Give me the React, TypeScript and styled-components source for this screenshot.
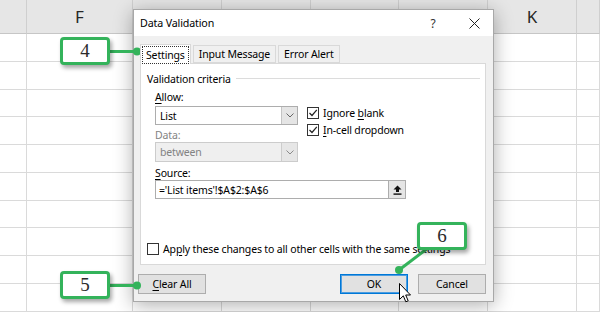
import React from 'react';
import styled, { createGlobalStyle } from 'styled-components';

const GlobalStyle = createGlobalStyle`
  * { box-sizing: border-box; }
  body {
    margin: 0;
    background: #fff;
    overflow: hidden;
  }
`;

const Page = styled.div`
  position: relative;
  width: 600px;
  height: 312px;
  overflow: hidden;
  background: #fff;
  font-family: "Noto Sans", "Open Sans", sans-serif;
  color: #000;
`;

// spreadsheet behind the dialog
const Sheet = styled.div`
  display: grid;
  grid-template-columns: 27px 106px 89px 88.5px 88.5px 89px 89px 23px;
  grid-template-rows: 34px repeat(11, 27.75px);
`;

const HeadCell = styled.div`
  display: flex;
  align-items: center;
  justify-content: center;
  background: #e6e6e6;
  border-right: 1px solid #cfcfcf;
  border-bottom: 1px solid #c6c6c6;
  font-size: 17px;
  color: #262626;
`;

const Cell = styled.div`
  border-right: 1px solid #dadada;
  border-bottom: 1px solid #dadada;
`;

// dialog window
const Dialog = styled.div`
  position: absolute;
  left: 133px;
  top: 9px;
  width: 361px;
  height: 293px;
  display: flex;
  flex-direction: column;
  background: #f0f0f0;
  border: 1px solid #a8a8a8;
  box-shadow: 0 3px 18px rgba(0, 0, 0, 0.32);
  font-size: 10.5px;
  letter-spacing: -0.15px;
`;

const TitleBar = styled.div`
  display: flex;
  align-items: center;
  height: 27px;
  padding-left: 6px;
  background: #fff;
`;

const Title = styled.div`
  flex: 1;
  font-size: 10.7px;
`;

const HelpButton = styled.div`
  width: 24px;
  margin-right: 10px;
  text-align: center;
  font-size: 12px;
  color: #333;
`;

const CloseButton = styled.div`
  width: 38px;
  display: flex;
  justify-content: center;
`;

const Body = styled.div`
  flex: 1;
  display: flex;
  flex-direction: column;
  padding: 9px 7px 7px 6px;
`;

const Tabs = styled.div`
  display: flex;
  align-items: flex-end;
  height: 18px;
  gap: 2px;
`;

const Tab = styled.div<{ $active?: boolean }>`
  display: flex;
  align-items: center;
  height: ${p => (p.$active ? 20 : 18)}px;
  padding: 0 ${p => (p.$active ? 2 : 5)}px;
  background: ${p => (p.$active ? '#fff' : '#f0f0f0')};
  border: 1px solid #d9d9d9;
  border-bottom: ${p => (p.$active ? 'none' : '1px solid #d9d9d9')};
  margin-bottom: ${p => (p.$active ? -1 : 0)}px;
  position: relative;
  z-index: ${p => (p.$active ? 1 : 0)};
`;

const FocusText = styled.span`
  padding: 1px 3px;
  outline: 1px dotted #333;
  line-height: 14px;
`;

const Panel = styled.div`
  height: 202px;
  display: flex;
  flex-direction: column;
  background: #fff;
  border: 1px solid #d9d9d9;
  padding: 8px 5px 6px 6px;
`;

const GroupHeader = styled.div`
  display: flex;
  align-items: center;
  height: 14px;
  gap: 5px;
  &::after {
    content: '';
    flex: 1;
    height: 1px;
    background: #dcdcdc;
    margin-top: -1px;
  }
`;

const Criteria = styled.div`
  display: flex;
  flex-direction: column;
  padding-left: 8px;
`;

const FieldLabel = styled.div<{ $disabled?: boolean; $gap: number }>`
  height: 14px;
  line-height: 14px;
  margin-top: ${p => p.$gap}px;
  color: ${p => (p.$disabled ? '#838383' : '#000')};
`;

// the check boxes hang beside the Allow combo and do not push the rows below
const ComboRow = styled.div`
  display: flex;
  align-items: flex-start;
  gap: 9px;
  height: 19px;
  margin-top: 2px;
`;

const Combo = styled.div<{ $disabled?: boolean; $h: number }>`
  display: flex;
  flex-shrink: 0;
  width: 143px;
  height: ${p => p.$h}px;
  background: ${p => (p.$disabled ? '#efefef' : '#fff')};
  border: 1px solid ${p => (p.$disabled ? '#cccccc' : '#adadad')};
  color: ${p => (p.$disabled ? '#838383' : '#000')};
`;

const ComboText = styled.div`
  flex: 1;
  display: flex;
  align-items: center;
  padding-left: 4px;
`;

const DropButton = styled.div<{ $disabled?: boolean }>`
  width: 16px;
  display: flex;
  align-items: center;
  justify-content: center;
  background: ${p => (p.$disabled ? '#e6e6e6' : '#e5e5e5')};
  border-left: 1px solid ${p => (p.$disabled ? '#cccccc' : '#c4c4c4')};
`;

const Checks = styled.div`
  display: flex;
  flex-direction: column;
  gap: 5px;
  margin-top: 1px;
`;

const CheckRow = styled.div`
  display: flex;
  align-items: center;
  gap: 4px;
  height: 12px;
`;

const Box = styled.div`
  width: 12px;
  height: 12px;
  flex-shrink: 0;
  border: 1px solid #333;
  background: #fff;
  display: flex;
  align-items: center;
  justify-content: center;
`;

const SourceBox = styled.div`
  display: flex;
  align-items: center;
  width: 251px;
  height: 19px;
  border: 1px solid #adadad;
  background: #fff;
`;

const SourceText = styled.div`
  flex: 1;
  padding-left: 3px;
`;

const RangeButton = styled.div`
  width: 17px;
  height: 17px;
  display: flex;
  align-items: center;
  justify-content: center;
  background: #e5e5e5;
  border-left: 1px solid #adadad;
`;

const ApplyRow = styled(CheckRow)`
  margin-top: auto;
  margin-bottom: 2px;
  height: 14px;
`;

const ButtonBar = styled.div`
  display: flex;
  justify-content: space-between;
  margin-top: 9px;
  margin-left: -2px;
`;

const ButtonGroup = styled.div`
  display: flex;
  gap: 10px;
`;

const Button = styled.div<{ $default?: boolean }>`
  width: 68px;
  height: 20px;
  display: flex;
  align-items: center;
  justify-content: center;
  background: #e1e1e1;
  border: 1px solid ${p => (p.$default ? '#0078d7' : '#adadad')};
  box-shadow: ${p => (p.$default ? 'inset 0 0 0 1px #4d9de0' : 'none')};
`;

const Key = styled.span`
  text-decoration: underline;
  text-underline-offset: 2px;
`;

// callouts over the screenshot
const Overlay = styled.svg`
  position: absolute;
  left: 0;
  top: 0;
  pointer-events: none;
`;

const Callout = styled.div<{ $x: number; $y: number }>`
  position: absolute;
  left: ${p => p.$x}px;
  top: ${p => p.$y}px;
  width: 50px;
  height: 28px;
  display: flex;
  align-items: center;
  justify-content: center;
  background: #fff;
  border: 3px solid #34b35b;
  border-radius: 4px;
  box-shadow: 2px 3px 4px rgba(0, 0, 0, 0.35);
  font-family: "Liberation Serif", serif;
  font-size: 19px;
  color: #2b2b2b;
`;

const Cursor = styled.svg`
  position: absolute;
  left: 399px;
  top: 283px;
`;

const Chevron = ({ color }: { color: string }) => (
  <svg width="8" height="5" viewBox="0 0 8 5">
    <path d="M0.5 0.5 L4 4 L7.5 0.5" fill="none" stroke={color} strokeWidth="1" />
  </svg>
);

const Tick = () => (
  <svg width="10" height="10" viewBox="0 0 10 10">
    <path d="M1.5 5 L4 7.5 L8.8 1.8" fill="none" stroke="#222" strokeWidth="1.2" />
  </svg>
);

const cols = ['', 'F', '', '', '', '', 'K', ''];

export default function App() {
  return (
    <Page>
      <GlobalStyle />
      <Sheet>
        {cols.map((c, i) => (
          <HeadCell key={'h' + i}>{c}</HeadCell>
        ))}
        {Array.from({ length: 11 * cols.length }).map((_, i) => (
          <Cell key={i} />
        ))}
      </Sheet>

      <Dialog>
        <TitleBar>
          <Title>Data Validation</Title>
          <HelpButton>?</HelpButton>
          <CloseButton>
            <svg width="11" height="11" viewBox="0 0 11 11">
              <path d="M0.5 0.5 L10.5 10.5 M10.5 0.5 L0.5 10.5" stroke="#222" strokeWidth="1" />
            </svg>
          </CloseButton>
        </TitleBar>
        <Body>
          <Tabs>
            <Tab $active>
              <FocusText>Settings</FocusText>
            </Tab>
            <Tab>Input Message</Tab>
            <Tab>Error Alert</Tab>
          </Tabs>
          <Panel>
            <GroupHeader>Validation criteria</GroupHeader>
            <Criteria>
              <FieldLabel $gap={4}>
                <Key>A</Key>llow:
              </FieldLabel>
              <ComboRow>
                <Combo $h={19}>
                  <ComboText>List</ComboText>
                  <DropButton>
                    <Chevron color="#666" />
                  </DropButton>
                </Combo>
                <Checks>
                  <CheckRow>
                    <Box>
                      <Tick />
                    </Box>
                    <span>
                      Ignore <Key>b</Key>lank
                    </span>
                  </CheckRow>
                  <CheckRow>
                    <Box>
                      <Tick />
                    </Box>
                    <span>
                      <Key>I</Key>n-cell dropdown
                    </span>
                  </CheckRow>
                </Checks>
              </ComboRow>
              <FieldLabel $disabled $gap={3}>
                Data:
              </FieldLabel>
              <Combo $disabled $h={20}>
                <ComboText>between</ComboText>
                <DropButton $disabled>
                  <Chevron color="#8a8a8a" />
                </DropButton>
              </Combo>
              <FieldLabel $gap={4}>
                <Key>S</Key>ource:
              </FieldLabel>
              <SourceBox>
                <SourceText>='List items'!$A$2:$A$6</SourceText>
                <RangeButton>
                  <svg width="9" height="10" viewBox="0 0 9 10">
                    <path d="M4.5 0.5 L8.5 4.5 L6 4.5 L6 7 L3 7 L3 4.5 L0.5 4.5 Z" fill="#111" />
                    <rect x="0.5" y="8.4" width="8" height="1.4" fill="#111" />
                  </svg>
                </RangeButton>
              </SourceBox>
            </Criteria>
            <ApplyRow>
              <Box />
              <span>
                Ap<Key>p</Key>ly these changes to all other cells with the same settings
              </span>
            </ApplyRow>
          </Panel>
          <ButtonBar>
            <Button>
              <span>
                <Key>C</Key>lear All
              </span>
            </Button>
            <ButtonGroup>
              <Button $default>OK</Button>
              <Button>Cancel</Button>
            </ButtonGroup>
          </ButtonBar>
        </Body>
      </Dialog>

      <Overlay width="600" height="312" viewBox="0 0 600 312">
        <g stroke="#34b35b" strokeWidth="3" fill="#34b35b">
          <line x1="108" y1="51.5" x2="137" y2="51.5" />
          <line x1="108" y1="285.5" x2="137" y2="285.5" />
          <line x1="428" y1="248" x2="399" y2="270" />
          <circle cx="137" cy="51.5" r="4" stroke="none" />
          <circle cx="137" cy="285.5" r="4" stroke="none" />
          <circle cx="399" cy="270" r="4" stroke="none" />
        </g>
      </Overlay>

      <Callout $x={60} $y={37}>4</Callout>
      <Callout $x={60} $y={271}>5</Callout>
      <Callout $x={417} $y={222}>6</Callout>

      <Cursor width="13" height="21" viewBox="0 0 13 21">
        <path
          d="M0.5 0.5 L0.5 16.5 L4.3 12.8 L6.8 18.8 L9.2 17.8 L6.7 12 L11.5 12 Z"
          fill="#fff"
          stroke="#000"
          strokeWidth="1"
          strokeLinejoin="round"
        />
      </Cursor>
    </Page>
  );
}
